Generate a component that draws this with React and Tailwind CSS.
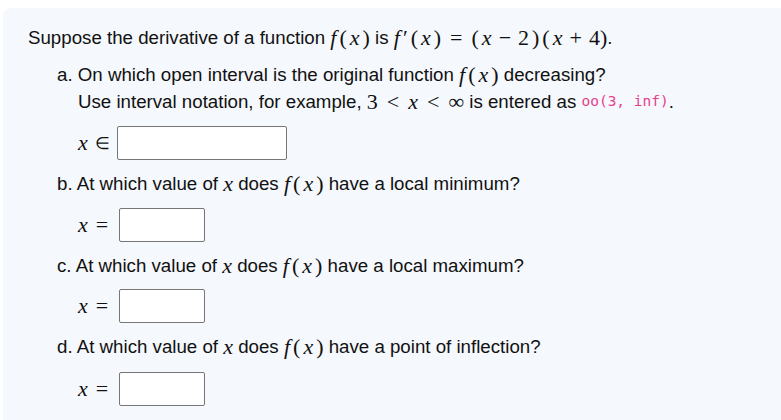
import React from "react";

const SERIF = { fontFamily: '"Liberation Serif", "Times New Roman", serif' };

const M = ({ children }) => (
  <span className="text-[22px] leading-none tracking-[3px] whitespace-nowrap" style={SERIF}>
    {children}
  </span>
);
const I = ({ children, className = "" }) => (
  <span className={"italic " + className} style={SERIF}>
    {children}
  </span>
);
const R = ({ children, className = "" }) => (
  <span className={className} style={SERIF}>
    {children}
  </span>
);

const Fx = () => (
  <M>
    <I>f</I>
    <R>(</R>
    <I>x</I>
    <R className="tracking-normal">)</R>
  </M>
);

const X = () => (
  <span className="text-[22px] leading-none italic" style={SERIF}>
    x
  </span>
);

const Box = ({ w }) => (
  <div className={`${w} shrink-0 h-[34px] bg-white border border-[#767676] rounded-[2px]`} />
);

const AnswerRow = ({ sym, w, lw, gap, symSize }) => (
  <div className="flex items-center pl-[50px]">
    <span className={`leading-none flex items-center shrink-0 ${lw}`}>
      <X />
      <span className={`${gap} ${symSize}`} style={SERIF}>{sym}</span>
    </span>
    <Box w={w} />
  </div>
);

const Question = ({ letter, end }) => (
  <div className="pl-[29px] h-[24px] flex items-center whitespace-nowrap">
    <span>{letter}. At which value of&nbsp;</span>
    <X />
    <span>&nbsp;does&nbsp;</span>
    <Fx />
    <span>&nbsp;{end}</span>
  </div>
);

export default function App() {
  return (
    <div
      className="bg-white w-[781px] h-[420px] overflow-hidden pt-[8px] pl-[3px] text-[18.7px] text-[#111]"
      style={{ fontFamily: '"Liberation Sans", Arial, sans-serif' }}
    >
      <div className="bg-[#f5f8fc] rounded-l-[7px] h-[430px] pl-[25px] pt-[18px]">
        <div className="h-[24px] flex items-center whitespace-nowrap">
          <span>Suppose the derivative of a function&nbsp;</span>
          <Fx />
          <span>&nbsp;is&nbsp;</span>
          <M>
            <I>f</I>
            <R>′(</R>
            <I>x</I>
            <R>)</R>
            <R className="mx-[6px]">=</R>
            <R>(</R>
            <I>x</I>
            <R className="mx-[4px]">−</R>
            <R>2)(</R>
            <I>x</I>
            <R className="mx-[4px]">+</R>
            <R className="tracking-normal">4)</R>
          </M>
          <span>.</span>
        </div>

        <div className="pl-[29px] mt-[13px]">
          <div className="h-[24px] flex items-center whitespace-nowrap">
            <span>a. On which open interval is the original function&nbsp;</span>
            <Fx />
            <span>&nbsp;decreasing?</span>
          </div>
          <div className="h-[24px] mt-[3px] pl-[21px] flex items-center whitespace-nowrap">
            <span>Use interval notation, for example,&nbsp;</span>
            <M>
              <R>3</R>
              <R className="mx-[6px]">&lt;</R>
              <I>x</I>
              <R className="mx-[6px]">&lt;</R>
              <R className="tracking-normal">∞</R>
            </M>
            <span>&nbsp;is entered as&nbsp;</span>
            <code
              className="text-[14.5px] text-[#e83e8c]"
              style={{ fontFamily: '"DejaVu Sans Mono", "Liberation Mono", monospace' }}
            >
              oo(3, inf)
            </code>
            <span>.</span>
          </div>
        </div>

        <div className="mt-[12px]">
          <AnswerRow sym="∈" w="w-[170px]" lw="w-[39px]" gap="ml-[7px]" symSize="text-[17px]" />
        </div>

        <div className="mt-[12px]">
          <Question letter="b" end="have a local minimum?" />
        </div>
        <div className="mt-[12px]">
          <AnswerRow sym="=" w="w-[86px]" lw="w-[41px]" gap="ml-[8px]" symSize="text-[22px]" />
        </div>

        <div className="mt-[12px]">
          <Question letter="c" end="have a local maximum?" />
        </div>
        <div className="mt-[11px]">
          <AnswerRow sym="=" w="w-[86px]" lw="w-[41px]" gap="ml-[8px]" symSize="text-[22px]" />
        </div>

        <div className="mt-[12px]">
          <Question letter="d" end="have a point of inflection?" />
        </div>
        <div className="mt-[13px]">
          <AnswerRow sym="=" w="w-[86px]" lw="w-[41px]" gap="ml-[8px]" symSize="text-[22px]" />
        </div>
      </div>
    </div>
  );
}
